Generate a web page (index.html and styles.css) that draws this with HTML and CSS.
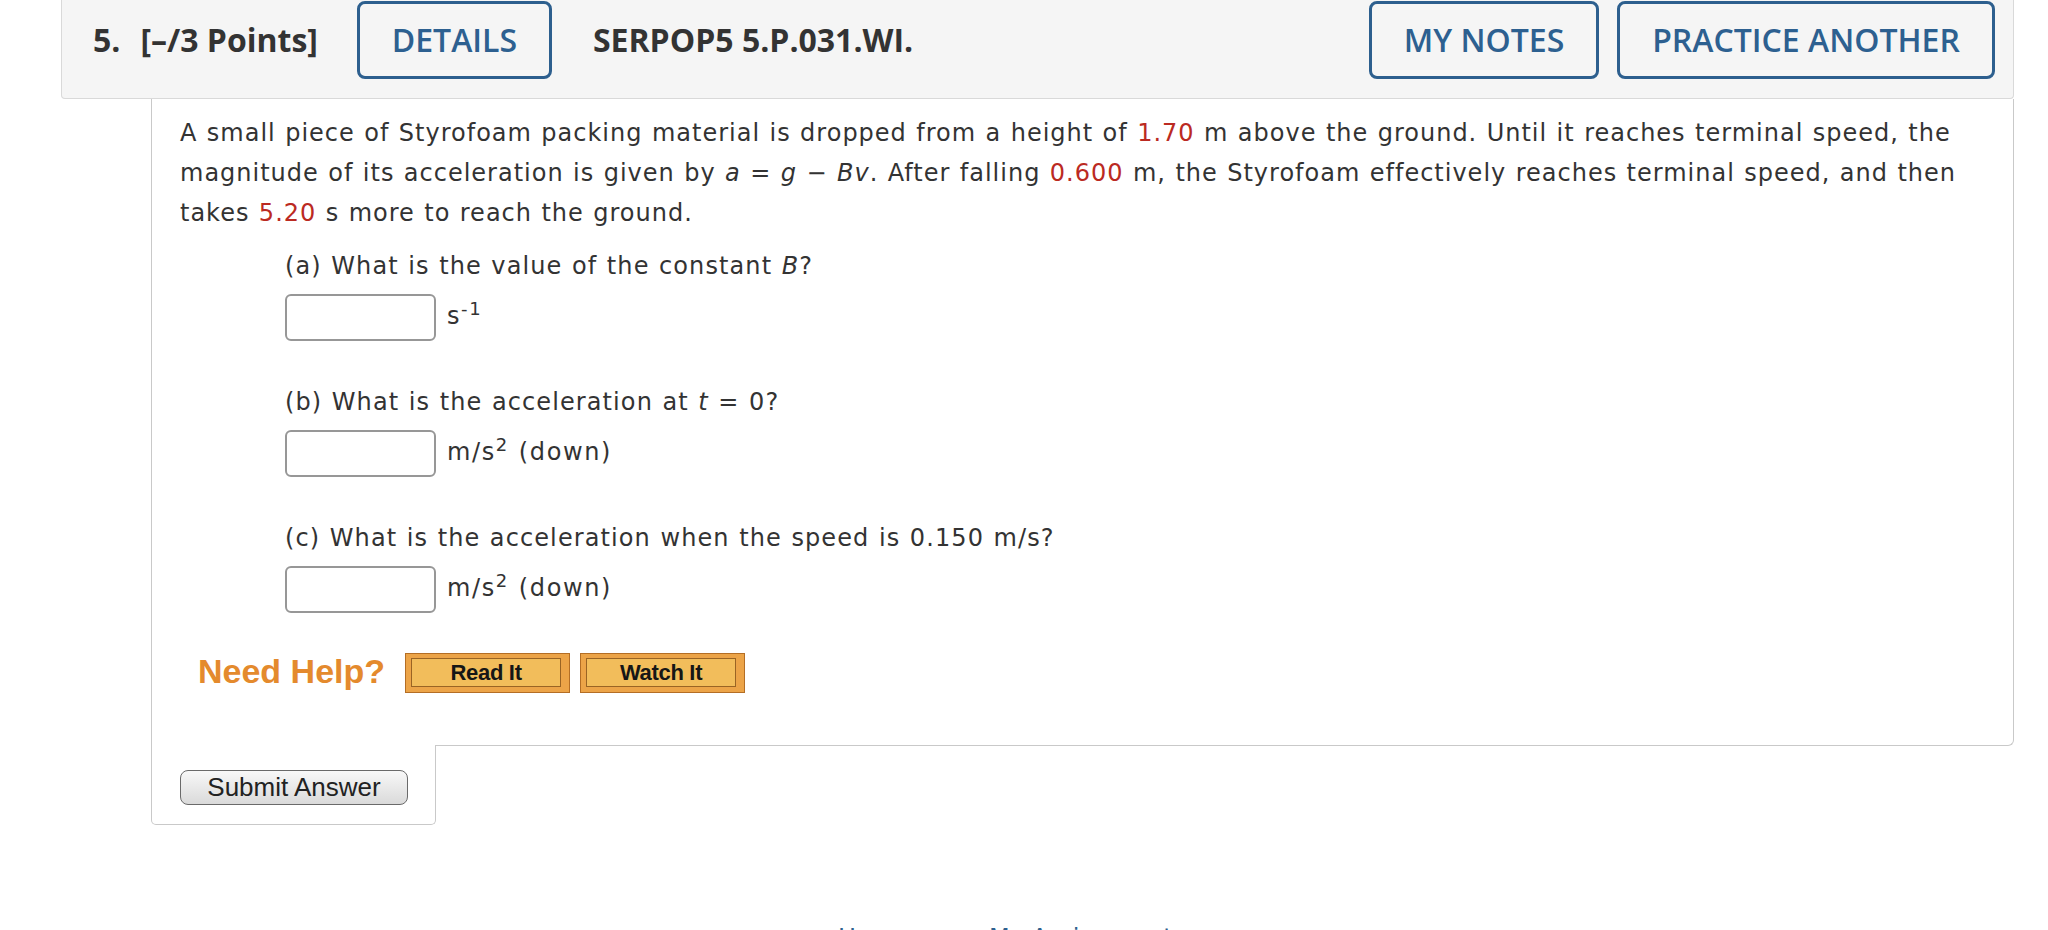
FILE: index.html
```html
<!DOCTYPE html>
<html lang="en">
<head>
<meta charset="utf-8">
<title>SERPOP5 5.P.031.WI.</title>
<link rel="stylesheet" href="styles.css">
</head>
<body>
<div class="page">
  <div class="q-header">
    <span class="q-num">5.</span>
    <span class="q-points">[–/3 Points]</span>
    <button class="hdr-btn details">DETAILS</button>
    <span class="q-code">SERPOP5 5.P.031.WI.</span>
    <div class="hdr-right">
      <button class="hdr-btn">MY NOTES</button>
      <button class="hdr-btn">PRACTICE ANOTHER</button>
    </div>
  </div>

  <div class="q-body">
    <p class="q-text">A small piece of Styrofoam packing material is dropped from a height of <span class="val">1.70</span> m above the ground. Until it reaches terminal speed, the magnitude of its acceleration is given by <i>a</i> = <i>g</i> &minus; <i>Bv</i>. After falling <span class="val">0.600</span> m, the Styrofoam effectively reaches terminal speed, and then takes <span class="val">5.20</span> s more to reach the ground.</p>

    <div class="parts">
      <div class="part">
        <div class="part-q">(a) What is the value of the constant <i>B</i>?</div>
        <div class="answer-row"><span class="ans-box"></span><span class="unit">s<sup>-1</sup></span></div>
      </div>
      <div class="part">
        <div class="part-q">(b) What is the acceleration at <i>t</i> = 0?</div>
        <div class="answer-row"><span class="ans-box"></span><span class="unit">m/s<sup>2</sup> (down)</span></div>
      </div>
      <div class="part">
        <div class="part-q">(c) What is the acceleration when the speed is 0.150 m/s?</div>
        <div class="answer-row"><span class="ans-box"></span><span class="unit">m/s<sup>2</sup> (down)</span></div>
      </div>
    </div>

    <div class="help-row">
      <span class="need-help">Need Help?</span>
      <span class="help-btn"><span class="help-inner">Read It</span></span>
      <span class="help-btn"><span class="help-inner">Watch It</span></span>
    </div>
  </div>

  <div class="submit-tab">
    <button class="submit-btn">Submit Answer</button>
  </div>

  <div class="footer-nav">
    <span>Home</span>
    <span>My Assignments</span>
  </div>
</div>
</body>
</html>
```

FILE: styles.css
```css
html, body {
  margin: 0;
  padding: 0;
  background: #ffffff;
}

body {
  font-family: "DejaVu Sans", Verdana, sans-serif;
  color: #333333;
  overflow: hidden;
}

.page {
  width: 1953px;
  margin-left: 61px;
}

/* ---------- header ---------- */
.q-header {
  box-sizing: border-box;
  height: 99px;
  display: flex;
  align-items: flex-start;
  padding: 1px 18px 0 31px;
  background: #f5f5f5;
  border: 1px solid #d9d9d9;
  border-top: none;
  border-radius: 0 0 4px 4px;
  font-family: "Open Sans", "Liberation Sans", sans-serif;
}

.q-num,
.q-points,
.q-code {
  font-weight: 700;
  font-size: 32px;
  line-height: 78px;
  color: #333333;
}

.q-num {
  margin-right: 20px;
}

.q-points {
  margin-right: 39px;
}

.q-code {
  margin-left: 41px;
}

.hdr-btn {
  box-sizing: border-box;
  height: 78px;
  padding: 0;
  background: transparent;
  border: 3px solid #2d5f8e;
  border-radius: 8px;
  color: #2d6090;
  font-family: "Open Sans", "Liberation Sans", sans-serif;
  font-size: 32px;
  font-weight: 600;
  line-height: 1;
  cursor: pointer;
}

.details {
  width: 195px;
}

.hdr-right {
  margin-left: auto;
  display: flex;
  gap: 18px;
}

.hdr-right .hdr-btn:first-child {
  width: 230px;
}

.hdr-right .hdr-btn:last-child {
  width: 378px;
}

/* ---------- body ---------- */
.q-body {
  box-sizing: border-box;
  margin-left: 90px;
  width: 1863px;
  padding: 14px 28px 52px 28px;
  border: 1px solid #c9c9c9;
  border-top: none;
  border-radius: 0 0 6px 0;
  font-size: 24px;
  line-height: 40px;
}

.q-text {
  margin: 0;
  width: 1800px;
  letter-spacing: 1px;
  word-spacing: 0.8px;
}

.val {
  color: #bb2a22;
}

.parts {
  margin: 13px 0 0 105px;
  display: flex;
  flex-direction: column;
  gap: 41px;
  letter-spacing: 1.1px;
  word-spacing: 0.8px;
}

.part-q {
  height: 40px;
}

.answer-row {
  margin-top: 8px;
  display: flex;
  align-items: center;
  gap: 11px;
}

.ans-box {
  box-sizing: border-box;
  width: 151px;
  height: 47px;
  border: 2px solid #979797;
  border-radius: 6px;
  background: #ffffff;
}

.unit {
  line-height: 32px;
  position: relative;
  top: -2px;
  letter-spacing: 1.6px;
}

.unit sup {
  font-size: 18px;
  line-height: 0;
  vertical-align: 9px;
}

/* ---------- help ---------- */
.help-row {
  margin: 40px 0 0 18px;
  display: flex;
  align-items: center;
}

.need-help {
  font-family: "Liberation Sans", Arial, sans-serif;
  font-weight: 700;
  font-size: 34px;
  line-height: 40px;
  color: #e48a2d;
  margin-right: 20px;
  position: relative;
  top: -2px;
}

.help-btn {
  box-sizing: border-box;
  width: 165px;
  height: 40px;
  padding: 4px 8px 5px 5px;
  margin-right: 10px;
  background: #eca448;
  border: 1px solid #b46e25;
  display: flex;
}

.help-inner {
  flex: 1;
  display: flex;
  align-items: center;
  justify-content: center;
  background: #f2bd5b;
  border: 1px solid #9a6424;
  font-family: "Liberation Sans", Arial, sans-serif;
  font-weight: 700;
  font-size: 22px;
  letter-spacing: -0.3px;
  color: #161616;
}

/* ---------- submit tab ---------- */
.submit-tab {
  box-sizing: border-box;
  margin: -1px 0 0 90px;
  width: 285px;
  height: 80px;
  padding: 25px 0 0 28px;
  background: #ffffff;
  border: 1px solid #c9c9c9;
  border-top: none;
  border-radius: 0 0 5px 5px;
}

.submit-btn {
  box-sizing: border-box;
  width: 228px;
  height: 35px;
  padding: 0;
  border: 1px solid #6a6a6a;
  border-radius: 8px;
  background: linear-gradient(#f8f8f8, #dadada);
  font-family: "Liberation Sans", Arial, sans-serif;
  font-size: 26px;
  line-height: 33px;
  color: #222222;
}

/* ---------- footer ---------- */
.footer-nav {
  margin-top: 93px;
  display: flex;
  gap: 80px;
  padding-left: 777px;
  font-size: 24px;
  line-height: 40px;
  color: #2d5f8e;
}
```
